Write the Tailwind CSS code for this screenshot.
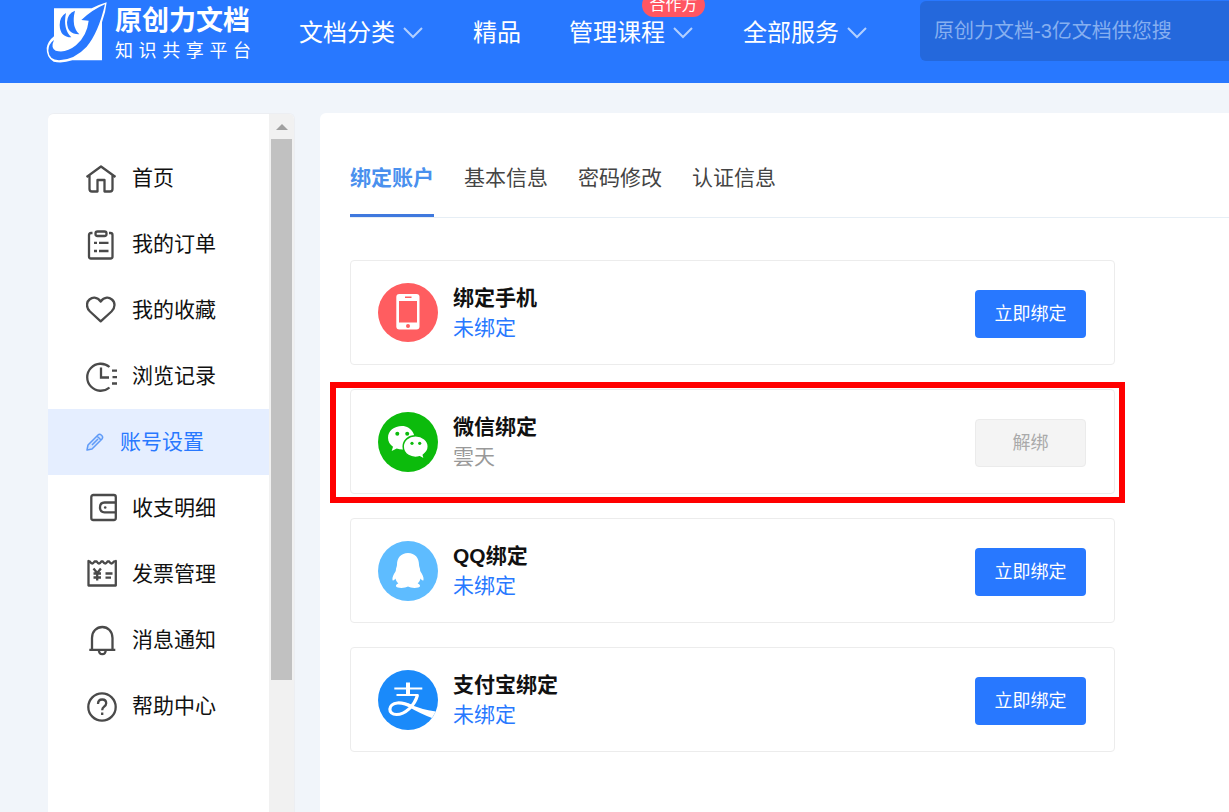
<!DOCTYPE html>
<html lang="zh-CN">
<head>
  <meta charset="UTF-8" />
  <meta name="viewport" content="width=device-width, initial-scale=1.0"/>
  <title>账号设置 - 原创力文档</title>
  <script src="https://cdn.jsdelivr.net/npm/@tailwindcss/browser@4"></script>
</head>
<body class="bg-[#f1f5fa] h-screen overflow-hidden flex flex-col font-['Liberation_Sans','Noto_Sans_CJK_SC',sans-serif] text-[#111]">

  <!-- Top bar -->
  <header class="bg-[#2878ff] text-white h-[83px] shrink-0 flex items-start pl-[46px]">
    <a href="#" class="flex gap-[7px] pt-[2px] shrink-0">
      <svg class="w-[62px] h-[62px]" viewBox="49 5 186 186">
        <path fill="#fff" d="M73 24H186Q208 13 231 6Q228 36 217 66V180H128Q98 190 72 184Q50 172 51 143Q55 122 73 108Z"/>
        <path fill="#2878ff" d="M226 12Q188 28 155 59L177 61Q172 106 139 135Q108 160 78 151Q62 143 73 119Q56 131 56 151Q58 178 88 180Q136 177 171 139Q206 98 226 12Z"/>
        <path fill="#2878ff" d="M109 38Q99 86 125 111Q91 111 90 74Q90 49 109 38Z"/>
        <path fill="#2878ff" d="M136 31Q124 78 149 102Q113 103 112 66Q113 39 136 31Z"/>
      </svg>
      <span class="w-[136px] pt-px">
        <span class="block text-[27px] leading-9 font-bold whitespace-nowrap">原创力文档</span>
        <span class="block text-[18px] leading-6 [text-align-last:justify]">知识共享平台</span>
      </span>
    </a>

    <nav class="flex items-center gap-12 ml-12 pt-[15px] text-[24px] leading-9 whitespace-nowrap shrink-0">
      <a href="#" class="flex items-center gap-2">文档分类
        <svg class="w-[22px] h-[22px]" viewBox="0 0 22 22" fill="none" stroke="#b3d0ff" stroke-width="2"><path d="M1 6l9 9 9-9"/></svg>
      </a>
      <a href="#">精品</a>
      <a href="#" class="relative flex items-center gap-2">管理课程
        <svg class="w-[22px] h-[22px]" viewBox="0 0 22 22" fill="none" stroke="#b3d0ff" stroke-width="2"><path d="M1 6l9 9 9-9"/></svg>
        <span class="absolute -top-[22px] left-[73px] w-[63px] h-6 rounded-full bg-[#ff5662] text-[16px] leading-6 text-center">合作方</span>
      </a>
      <a href="#" class="flex items-center gap-2">全部服务
        <svg class="w-[22px] h-[22px]" viewBox="0 0 22 22" fill="none" stroke="#b3d0ff" stroke-width="2"><path d="M1 6l9 9 9-9"/></svg>
      </a>
    </nav>

    <input type="search" aria-label="搜索文档" placeholder="原创力文档-3亿文档供您搜"
      class="ml-[51px] mt-px flex-1 min-w-0 h-[60px] rounded-l-md bg-[#2468dc] px-[14px] text-[20px] placeholder:text-[#86aff0] outline-none"/>
  </header>

  <div class="flex flex-1 min-h-0 pl-12 pt-[30px]">

    <!-- Sidebar -->
    <aside class="flex w-[247px] shrink-0 rounded-t-md bg-white border-t border-r border-[#eceef2] overflow-hidden">
      <nav class="flex-1 pt-[31px] text-[21px] leading-[30px]">
        <a href="#" class="flex items-center h-[66px] pl-[38px] gap-[14px]">
          <svg class="w-8 h-8" viewBox="0 0 32 32" fill="none" stroke="#4a4a4a" stroke-width="2.300" stroke-linejoin="round"><path d="M.5 15L15 4.500 29.500 15M3.500 13.500V27q0 2.500 2.500 2.500h5.500V18h7v11.500H24q2.500 0 2.500-2.500V13.500"/></svg>
          首页
        </a>
        <a href="#" class="flex items-center h-[66px] pl-[38px] gap-[14px]">
          <svg class="w-8 h-8" viewBox="0 0 32 32" fill="none" stroke="#4a4a4a" stroke-width="2.300"><path d="M6.500 5H5q-2 0-2 2v21.500q0 2 2 2h19.500q2 0 2-2V7q0-2-2-2H23"/><rect x="9.500" y="3.500" width="11" height="4.500" rx="2"/><path d="M8 14.800h3M13 14.800h9.500M8 23h3M13 23h9.500"/></svg>
          我的订单
        </a>
        <a href="#" class="flex items-center h-[66px] pl-[38px] gap-[14px]">
          <svg class="w-8 h-8" viewBox="0 0 32 32" fill="none" stroke="#4a4a4a" stroke-width="2.300" stroke-linejoin="round"><path d="M14.700 27.300L4 17.500Q1 14.500 1 11q0-3.500 2.500-5.500Q6 3.500 8.500 3.700q3.700.3 6.200 3.800 2.500-3.500 6.200-3.800 2.500-.2 5 1.800 2.600 2 2.600 5.500t-3 6.500z"/></svg>
          我的收藏
        </a>
        <a href="#" class="flex items-center h-[66px] pl-[38px] gap-[14px]">
          <svg class="w-8 h-8" viewBox="0 0 32 32" fill="none" stroke="#4a4a4a" stroke-width="2.300"><path d="M23.500 7A13.500 13.500 0 1 0 23.500 27.500M15 7.500v10h8M26 10.700h5M26.500 17.200H31M26 23.500h5"/></svg>
          浏览记录
        </a>
        <a href="#" aria-current="page" class="flex items-center h-[66px] pl-[38px] gap-4 bg-[#e5eeff] text-[#2878ff]">
          <svg class="w-[18px] h-[18px]" viewBox="0 0 18 18" fill="#d3e3fe" stroke="#5f9bf8" stroke-width="1.500" stroke-linejoin="round"><path d="M1 17l1-5L12 2q1.500-1.500 3.500.2T16 6L6 16zM6 12l6-6M11 3l4 4"/></svg>
          账号设置
        </a>
        <a href="#" class="flex items-center h-[66px] pl-[38px] gap-[14px]">
          <svg class="w-8 h-8" viewBox="0 0 32 32" fill="none" stroke="#4a4a4a" stroke-width="2.300"><rect x="5.300" y="3" width="24.500" height="25" rx="2"/><path d="M30 10.500H18.500q-4.500 0-4.500 4.900t4.500 4.900H30"/><circle cx="19.200" cy="15.500" r="1.300" fill="#4a4a4a" stroke="none"/></svg>
          收支明细
        </a>
        <a href="#" class="flex items-center h-[66px] pl-[38px] gap-[14px]">
          <svg class="w-8 h-8" viewBox="0 0 32 32" fill="none" stroke="#4a4a4a" stroke-width="2.300" stroke-linejoin="round"><path d="M2.500 3v24.500h27.300V3l-2 .5q-2.300 4-4.600 0h-1.700q-2.300 4-4.600 0h-1.600q-2.300 4-4.600 0H8.500q-2.300 4-4.600 0z"/><path d="M7.500 10.500l3.700 4.500 3.700-4.500M11.200 15v7.500M7.500 15.500h7.500M7.500 19.500h7.500M19.500 15.500h7M19.500 19.700h5.500"/></svg>
          发票管理
        </a>
        <a href="#" class="flex items-center h-[66px] pl-[38px] gap-[14px]">
          <svg class="w-8 h-8" viewBox="0 0 32 32" fill="none" stroke="#4a4a4a" stroke-width="2.300"><path d="M3.300 25.800h26M6 25.500V14q0-5 3-8t7.300-3 7.200 3 3 8v11.500M12.800 26q.2 4.200 3.500 4.200t3.500-4.200"/></svg>
          消息通知
        </a>
        <a href="#" class="flex items-center h-[66px] pl-[38px] gap-[14px]">
          <svg class="w-8 h-8" viewBox="0 0 32 32" fill="none" stroke="#4a4a4a" stroke-width="2.300"><circle cx="16" cy="17" r="13.700"/><path d="M12 14q0-4.500 4.200-4.500 4 0 4 3.800 0 2-2.200 3.400-1.800 1.200-1.800 3.600M16.200 22.500v2.500"/></svg>
          帮助中心
        </a>
      </nav>

      <!-- Scrollbar -->
      <div class="w-[25px] bg-[#f1f1f1] pl-[2px] pr-[2px]">
        <div class="h-[25px] flex items-center justify-center">
          <svg class="w-3 h-[6px]" viewBox="0 0 12 6"><path d="M0 6L6 0l6 6z" fill="#a0a0a0"/></svg>
        </div>
        <div class="h-[541px] bg-[#c1c1c1]"></div>
      </div>
    </aside>

    <!-- Account binding -->
    <main class="flex-1 min-w-0 ml-[25px] bg-white rounded-tl-md pl-[30px] pt-[43px]">
      <div class="flex gap-[30px] border-b border-[#e6eef5] text-[21px] leading-[44px] text-[#444] whitespace-nowrap">
        <a href="#" aria-current="page" class="h-[61px] border-b-3 border-[#3f79de] font-bold text-[#4a90ee]">绑定账户</a>
        <a href="#">基本信息</a>
        <a href="#">密码修改</a>
        <a href="#">认证信息</a>
      </div>

      <div class="mt-[42px] max-w-[765px] flex flex-col gap-6 text-[21px] leading-[30px]">
        <section class="h-[105px] border border-[#ececec] rounded flex items-center pl-[27px] pr-7">
          <svg class="w-[60px] h-[60px]" viewBox="0 0 60 60"><ellipse cx="30" cy="29.500" rx="30" ry="29.500" fill="#ff5d60"/><rect x="18.300" y="11" width="23.200" height="35.500" rx="3" fill="#fff"/><path fill="#ff5d60" d="M21 18h18v21.500H21zM27 13.500h6.500v1.500H27z"/><circle cx="30" cy="43" r="2" fill="#ff5d60"/></svg>
          <div class="ml-[15px] flex-1">
            <h3 class="font-bold">绑定手机</h3>
            <p class="text-[#2878ff]">未绑定</p>
          </div>
          <button type="button" class="w-[111px] h-12 mt-[2px] rounded bg-[#2878ff] text-white text-[18px]">立即绑定</button>
        </section>

        <section class="relative h-[105px] border border-[#ececec] rounded flex items-center pl-[27px] pr-7">
          <svg class="w-[60px] h-[60px]" viewBox="0 0 60 60"><circle cx="30" cy="30" r="30" fill="#0cbb0c"/><path fill="#fff" d="M24 14c-8 0-14 5-14 11.700 0 4 2 7 5 9l-1.300 4.300 5-2.500c6 2 13 1 16.500-4 4.500-8-1.500-18.500-11.200-18.500z"/><path fill="#fff" stroke="#0cbb0c" stroke-width="1.500" d="M37.500 23.800c-7 0-12.300 4.700-12.300 10.700 0 8 8 12.500 16.500 10.300l4.800 2.500-1.200-4.300c3-2.200 5-5 5-8.500 0-6-5.800-10.700-12.800-10.700z"/><g fill="#0cbb0c"><circle cx="19.300" cy="21.700" r="2"/><circle cx="29.200" cy="21.700" r="2"/><circle cx="34" cy="31.300" r="1.600"/><circle cx="41.700" cy="31.300" r="1.600"/></g></svg>
          <div class="ml-[15px] flex-1">
            <h3 class="font-bold">微信绑定</h3>
            <p class="text-[#999]">雲天</p>
          </div>
          <button type="button" class="w-[111px] h-12 mt-[2px] rounded border border-[#ebebeb] bg-[#f4f4f4] text-[#aaa] text-[18px]">解绑</button>
          <!-- highlight frame -->
          <div class="absolute -top-2 -bottom-[10px] -left-[21px] -right-[11px] border-6 border-[#f00] pointer-events-none"></div>
        </section>

        <section class="h-[105px] border border-[#ececec] rounded flex items-center pl-[27px] pr-7">
          <svg class="w-[60px] h-[60px]" viewBox="0 0 60 60"><circle cx="30" cy="30" r="30" fill="#5ebcff"/><path fill="#fff" d="M30 12c-7 0-11 5-11 11.500 0 2-.8 3-1 4.500-.2 1 0 1.500-.5 2.500-2 3-3.500 6-3 8.500.5 1.500 2.300-.5 3-1.500.5 2 1.300 3.500 2.800 5-1.800.7-2.500 1.700-2.300 2.700.5 2.200 9 2.300 12 .3 3 2 11.500 1.900 12-.3.200-1-.5-2-2.300-2.700 1.500-1.500 2.300-3 2.800-5 .7 1 2.500 3 3 1.500.5-2.500-1-5.500-3-8.500-.5-1-.3-1.500-.5-2.500-.2-1.500-1-2.500-1-4.500C41 17 37 12 30 12z"/></svg>
          <div class="ml-[15px] flex-1">
            <h3 class="font-bold">QQ绑定</h3>
            <p class="text-[#2878ff]">未绑定</p>
          </div>
          <button type="button" class="w-[111px] h-12 mt-[2px] rounded bg-[#2878ff] text-white text-[18px]">立即绑定</button>
        </section>

        <section class="h-[105px] border border-[#ececec] rounded flex items-center pl-[27px] pr-7">
          <svg class="w-[60px] h-[60px]" viewBox="0 0 60 60"><circle cx="30" cy="30" r="30" fill="#1a8afa"/><g fill="none" stroke="#fff"><path stroke-width="4" d="M30 12.500V24"/><path stroke-width="2.200" d="M16.300 18.500h28M18.500 25h22"/><path stroke-width="3.200" d="M39.500 25C36.500 36 27 44.500 18.500 44.500c-9 0-9-10.500 1-11.500 5-.4 10 1.500 15 4"/></g><path fill="#fff" d="M30 33.500q13 6 27.800 8L54 48q-11-4-25-12z"/></svg>
          <div class="ml-[15px] flex-1">
            <h3 class="font-bold">支付宝绑定</h3>
            <p class="text-[#2878ff]">未绑定</p>
          </div>
          <button type="button" class="w-[111px] h-12 mt-[2px] rounded bg-[#2878ff] text-white text-[18px]">立即绑定</button>
        </section>
      </div>
    </main>
  </div>

</body>
</html>
